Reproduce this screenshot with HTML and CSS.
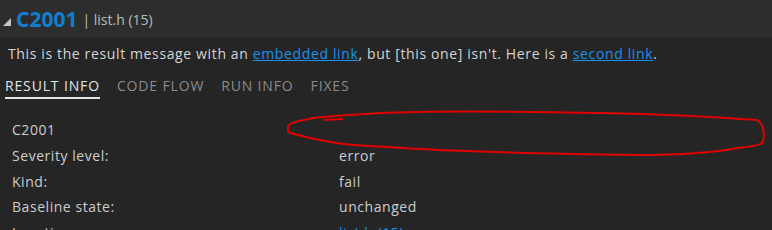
FILE: index.html
```html
<!DOCTYPE html>
<html lang="en">
<head>
    <meta charset="UTF-8">
    <title>Result Info</title>
    <link rel="stylesheet" href="styles.css">
</head>
<body>
    <div class="panel">
        <div class="header">
            <span class="twisty"></span>
            <span class="rule-id">C2001</span>
            <span class="location">| list.h (15)</span>
        </div>
        <div class="message">
            This is the result message with an <a href="#">embedded link</a>, but [this one] isn't. Here is a <a href="#">second link</a>.
        </div>
        <div class="tabs">
            <span class="tab active">RESULT INFO</span>
            <span class="tab">CODE FLOW</span>
            <span class="tab">RUN INFO</span>
            <span class="tab">FIXES</span>
        </div>
        <div class="info">
            <div class="row">
                <span class="label">C2001</span>
                <span class="value"></span>
            </div>
            <div class="row">
                <span class="label">Severity level:</span>
                <span class="value">error</span>
            </div>
            <div class="row">
                <span class="label">Kind:</span>
                <span class="value">fail</span>
            </div>
            <div class="row">
                <span class="label">Baseline state:</span>
                <span class="value">unchanged</span>
            </div>
            <div class="row">
                <span class="label">Location:</span>
                <span class="value"><a href="#">list.h (15)</a></span>
            </div>
        </div>
        <!-- hand-drawn annotation over the empty value -->
        <svg class="scribble" width="772" height="230" viewBox="0 0 772 230">
            <path d="M288 127 C289 122 300 121 313 118 C330 116 350 115 380 113 C420 111 500 111 603 113 C650 114 700 116 757 120 C765 124 765 138 762 143 C755 147 745 147 737 148 C720 152 680 155 637 155 C560 154 450 151 403 148 C370 146 345 145 337 143 C320 140 305 138 288 132 Z" />
            <path d="M323 120 L343 119" />
        </svg>
    </div>
</body>
</html>
```

FILE: styles.css
```css
body {
    margin: 0;
    padding: 0;
    background-color: #252526;
    font-family: "Open Sans", sans-serif;
    font-size: 14px;
    letter-spacing: 0.55px;
    color: #cccccc;
}
.panel {
    position: relative;
    height: 230px;
    overflow: hidden;
}
.header {
    height: 38px;
    background-color: #2d2d2d;
    display: flex;
    align-items: center;
    padding-left: 3px;
}
.twisty {
    width: 0;
    height: 0;
    border-left: 8px solid transparent;
    border-bottom: 8px solid #c5c5c5;
    margin: 6px 5px 0 0;
}
.rule-id {
    color: #0e7fd1;
    font-size: 21px;
    font-weight: 700;
    letter-spacing: 0;
    margin-right: 5px;
}
.location {
    color: #bbbbbb;
    letter-spacing: 0;
}
.message {
    padding: 6px 8px 0;
    line-height: 20px;
    letter-spacing: 0.63px;
    color: #d4d4d4;
}
a {
    color: #1a91e8;
}
.tabs {
    display: flex;
    gap: 17px;
    padding: 12px 5px 0;
    letter-spacing: 0.85px;
}
.tab {
    color: #8a8a8a;
    padding-bottom: 2px;
    border-bottom: 2px solid transparent;
}
.tab.active {
    color: #e4e4e4;
    border-bottom-color: #e4e4e4;
}
.info {
    padding: 18px 12px 0;
}
.row {
    display: flex;
    height: 25.7px;
    align-items: center;
}
.label {
    width: 327px;
}
.scribble {
    position: absolute;
    left: 0;
    top: 0;
    fill: none;
    stroke: #e00000;
    stroke-width: 2;
}
```
